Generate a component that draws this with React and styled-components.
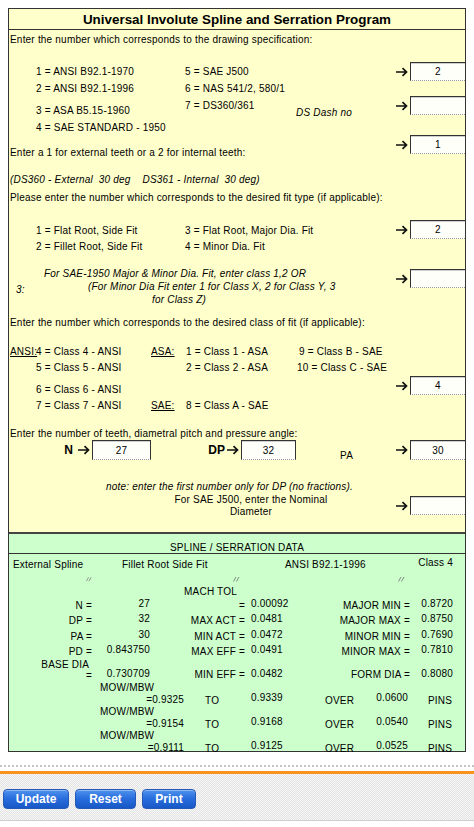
import React from "react";
import styled, { createGlobalStyle } from "styled-components";

const GlobalStyle = createGlobalStyle`
  html, body { margin: 0; padding: 0; background: #fff; }
  body { font-family: "Liberation Sans", Arial, sans-serif; color: #000; }
`;

const Page = styled.div`
  width: 474px;
  height: 827px;
  overflow: hidden;
  display: flex;
  flex-direction: column;
  background: #fff;
`;

const Sheet = styled.div`
  margin: 8px 0 0 8px;
  width: 456px;
  border: 1px solid #333;
  display: flex;
  flex-direction: column;
  font-size: 10px;
  letter-spacing: 0.2px;
`;

const Title = styled.div`
  height: 21px;
  background: #ffffcc;
  border-bottom: 1px solid #333;
  display: flex;
  align-items: center;
  justify-content: center;
  font-size: 13.4px;
  font-weight: bold;
  letter-spacing: 0;
  padding-top: 1px;
  box-sizing: border-box;
`;

const InputSection = styled.div`
  background: #ffffcc;
  border-bottom: 2px solid #444;
  display: flex;
  flex-direction: column;
`;

const Line = styled.div`
  display: grid;
  grid-template-columns: 27px 115px 34px 111px 100px 14px 55px;
  align-items: start;
  height: ${(p) => p.$h}px;
  margin-top: ${(p) => p.$mt || 0}px;
`;

const Txt = styled.div`
  grid-column: ${(p) => p.$col};
  grid-row: 1;
  padding-top: ${(p) => (p.$pt || 0) + 1}px;
  padding-left: ${(p) => p.$pl || 0}px;
  padding-right: ${(p) => p.$pr || 0}px;
  line-height: 12px;
  white-space: nowrap;
  font-style: ${(p) => (p.$italic ? "italic" : "normal")};
  text-align: ${(p) => p.$align || "left"};
`;

const Under = styled.span`
  text-decoration: underline;
`;

const Stack = styled.div`
  grid-column: ${(p) => p.$col};
  grid-row: 1;
  padding-top: ${(p) => (p.$pt || 0) + 1}px;
  padding-right: ${(p) => p.$pr || 0}px;
  line-height: ${(p) => p.$lh || 12}px;
  font-style: ${(p) => (p.$italic ? "italic" : "normal")};
  text-align: ${(p) => p.$align || "left"};
  white-space: nowrap;
`;

const IndentLine = styled.div`
  margin-left: ${(p) => p.$indent}px;
`;

const RightLine = styled.div`
  text-align: right;
`;

const ArrowCell = styled.div`
  grid-column: 6 / 7;
  grid-row: 1;
  height: 19px;
  margin-top: ${(p) => p.$top || 0}px;
  display: flex;
  align-items: center;
`;

const InputBox = styled.div`
  grid-column: ${(p) => p.$col || "7 / 8"};
  grid-row: 1;
  width: ${(p) => p.$w || 55}px;
  height: ${(p) => p.$hh || 19}px;
  margin-top: ${(p) => p.$top || 0}px;
  box-sizing: border-box;
  border: 1px solid #333;
  border-right: ${(p) => (p.$edge ? "none" : "1px solid #333")};
  border-bottom: 1px dotted #999;
  box-shadow: inset 0 1px 0 #cfcfcf;
  background: #fffffa;
  display: flex;
  align-items: center;
  justify-content: center;
  font-size: 10px;
  line-height: 12px;
  padding-top: 1px;
`;

const EntryGroup = styled.div`
  grid-column: ${(p) => p.$col};
  grid-row: 1;
  display: flex;
  justify-content: flex-end;
  align-items: center;
  gap: 2px;
`;

const BigLabel = styled.span`
  font-size: 12px;
  font-weight: bold;
  letter-spacing: 0;
  margin-right: ${(p) => p.$gap || 0}px;
`;

const DataSection = styled.div`
  background: #ccffcc;
  display: flex;
  flex-direction: column;
`;

const DataHead = styled.div`
  height: 20px;
  box-sizing: border-box;
  border-bottom: 1px solid #333;
  padding-top: 8px;
  line-height: 12px;
  text-align: center;
`;

const DataRow = styled.div`
  display: grid;
  grid-template-columns: 83px 58px 95px 85px 80px 43px 12px;
  align-items: start;
  height: ${(p) => p.$h}px;
`;

const MowRow = styled.div`
  display: grid;
  grid-template-columns: 91px 84px 21px 46px 74px 41px 42px 20px 37px;
  align-items: start;
  height: ${(p) => p.$h || 24}px;
`;

const Grip = styled.div`
  grid-column: ${(p) => p.$col};
  grid-row: 1;
  padding-left: ${(p) => p.$pl}px;
  padding-top: 4px;
  display: flex;
`;

const Footer = styled.div`
  margin-top: 13px;
  border-top: 2px dotted #c4c4c4;
  padding-top: 4px;
  display: flex;
  flex-direction: column;
`;

const OrangeBar = styled.div`
  height: 3px;
  background: #f7941d;
`;

const Toolbar = styled.div`
  height: 47px;
  box-sizing: border-box;
  border-bottom: 1px solid #cfcfcf;
  background: repeating-conic-gradient(#e4e4e4 0 25%, #f6f6f6 0 50%) 0 0 / 2px 2px;
  display: flex;
  align-items: flex-start;
  gap: 6px;
  padding: 15px 0 0 3px;
`;

const Button = styled.button`
  width: ${(p) => p.$w}px;
  height: 20px;
  border: 1px solid #2559b8;
  border-radius: 4px;
  background: linear-gradient(#4f93ee 0%, #2a6fde 45%, #1857c6 100%);
  color: #fff;
  font-family: "Liberation Sans", Arial, sans-serif;
  font-size: 12px;
  font-weight: bold;
  padding: 0;
  cursor: pointer;
  box-shadow: inset 0 1px 0 rgba(255, 255, 255, 0.35);
`;

const ArrowIcon = () => (
  <svg width="12" height="10" viewBox="0 0 12 10">
    <path d="M0 5H10.5M6.5 1.2L10.5 5L6.5 8.8" stroke="#111" strokeWidth="1.7" fill="none" />
  </svg>
);

const GripIcon = () => (
  <svg width="7" height="6" viewBox="0 0 7 6">
    <path d="M0.5 5.5L3 1M3.5 5.5L6 1" stroke="#7a7a7a" strokeWidth="0.9" fill="none" />
  </svg>
);

const Arrow = ({ top }) => (
  <ArrowCell $top={top}>
    <ArrowIcon />
  </ArrowCell>
);

const dataRows = [
  { h: 15, l1: "N =", v1: "27", l2: "=", v2: "0.00092", l3: "MAJOR MIN =", v3: "0.8720" },
  { h: 16, l1: "DP =", v1: "32", l2: "MAX ACT =", v2: "0.0481", l3: "MAJOR MAX =", v3: "0.8750" },
  { h: 15, l1: "PA =", v1: "30", l2: "MIN ACT =", v2: "0.0472", l3: "MINOR MIN =", v3: "0.7690" },
  { h: 15, l1: "PD =", v1: "0.843750", l2: "MAX EFF =", v2: "0.0491", l3: "MINOR MAX =", v3: "0.7810" },
];

const mowRows = [
  ["=0.9325", "0.9339", "0.0600"],
  ["=0.9154", "0.9168", "0.0540"],
  ["=0.9111", "0.9125", "0.0525"],
];

export default function App() {
  return (
    <Page>
      <GlobalStyle />
      <Sheet>
        <Title>Universal Involute Spline and Serration Program</Title>
        <InputSection>
          <Line $h={19}>
            <Txt $col="1 / 6" $pt={3} $pl={1}>
              Enter the number which corresponds to the drawing specification:
            </Txt>
          </Line>
          <Line $h={19} $mt={13}>
            <Txt $col="2 / 4" $pt={3}>1 = ANSI B92.1-1970</Txt>
            <Txt $col="4 / 5" $pt={3}>5 = SAE J500</Txt>
            <Arrow />
            <InputBox $edge>2</InputBox>
          </Line>
          <Line $h={15}>
            <Txt $col="2 / 4" $pt={1}>2 = ANSI B92.1-1996</Txt>
            <Txt $col="4 / 5" $pt={1}>6 = NAS 541/2, 580/1</Txt>
          </Line>
          <Line $h={22}>
            <Txt $col="2 / 4" $pt={8}>3 = ASA B5.15-1960</Txt>
            <Txt $col="4 / 5" $pt={3}>7 = DS360/361</Txt>
            <Txt $col="5 / 6" $pt={10} $italic>DS Dash no</Txt>
            <Arrow />
            <InputBox $edge />
          </Line>
          <Line $h={17}>
            <Txt $col="2 / 5" $pt={3}>4 = SAE STANDARD - 1950</Txt>
          </Line>
          <Line $h={25}>
            <Txt $col="1 / 6" $pt={11} $pl={1}>
              Enter a 1 for external teeth or a 2 for internal teeth:
            </Txt>
            <Arrow />
            <InputBox $edge>1</InputBox>
          </Line>
          <Line $h={28}>
            <Txt $col="1 / 6" $pt={13} $pl={1} $italic>
              (DS360 - External&nbsp; 30 deg&nbsp;&nbsp;&nbsp; DS361 - Internal&nbsp; 30 deg)
            </Txt>
          </Line>
          <Line $h={18}>
            <Txt $col="1 / 8" $pt={3} $pl={1}>
              Please enter the number which corresponds to the desired fit type (if applicable):
            </Txt>
          </Line>
          <Line $h={19} $mt={14}>
            <Txt $col="2 / 4" $pt={4}>1 = Flat Root, Side Fit</Txt>
            <Txt $col="4 / 6" $pt={4}>3 = Flat Root, Major Dia. Fit</Txt>
            <Arrow />
            <InputBox $edge>2</InputBox>
          </Line>
          <Line $h={15}>
            <Txt $col="2 / 4" $pt={1}>2 = Fillet Root, Side Fit</Txt>
            <Txt $col="4 / 6" $pt={1}>4 = Minor Dia. Fit</Txt>
          </Line>
          <Line $h={40} $mt={11}>
            <Txt $col="1 / 2" $pt={18} $pl={7} $italic>3:</Txt>
            <Stack $col="2 / 6" $pt={1} $lh={13} $italic>
              <IndentLine $indent={8}>For SAE-1950 Major &amp; Minor Dia. Fit, enter class 1,2 OR</IndentLine>
              <IndentLine $indent={52}>(For Minor Dia Fit enter 1 for Class X, 2 for Class Y, 3</IndentLine>
              <IndentLine $indent={116}>for Class Z)</IndentLine>
            </Stack>
            <Arrow top={4} />
            <InputBox $edge $top={4} />
          </Line>
          <Line $h={38}>
            <Txt $col="1 / 8" $pt={11} $pl={1}>
              Enter the number which corresponds to the desired class of fit (if applicable):
            </Txt>
          </Line>
          <Line $h={16}>
            <Txt $col="1 / 2" $pt={2} $pl={1}><Under>ANSI:</Under></Txt>
            <Txt $col="2 / 3" $pt={2}>4 = Class 4 - ANSI</Txt>
            <Txt $col="3 / 4" $pt={2}><Under>ASA:</Under></Txt>
            <Txt $col="4 / 5" $pt={2} $pl={1}>1 = Class 1 - ASA</Txt>
            <Txt $col="5 / 6" $pt={2} $pl={3}>9 = Class B - SAE</Txt>
          </Line>
          <Line $h={16}>
            <Txt $col="2 / 3" $pt={2}>5 = Class 5 - ANSI</Txt>
            <Txt $col="4 / 5" $pt={2} $pl={1}>2 = Class 2 - ASA</Txt>
            <Txt $col="5 / 6" $pt={2} $pl={1}>10 = Class C - SAE</Txt>
          </Line>
          <Line $h={21}>
            <Txt $col="2 / 3" $pt={8}>6 = Class 6 - ANSI</Txt>
            <Arrow top={1} />
            <InputBox $edge $top={1}>4</InputBox>
          </Line>
          <Line $h={17}>
            <Txt $col="2 / 3" $pt={3}>7 = Class 7 - ANSI</Txt>
            <Txt $col="3 / 4" $pt={3}><Under>SAE:</Under></Txt>
            <Txt $col="4 / 5" $pt={3} $pl={1}>8 = Class A - SAE</Txt>
          </Line>
          <Line $h={27}>
            <Txt $col="1 / 8" $pt={14} $pl={1}>
              Enter the number of teeth, diametral pitch and pressure angle:
            </Txt>
          </Line>
          <Line $h={20}>
            <EntryGroup $col="1 / 3">
              <BigLabel $gap={3}>N</BigLabel>
              <ArrowIcon />
              <InputBox $w={59} $hh={20}>27</InputBox>
            </EntryGroup>
            <EntryGroup $col="3 / 5">
              <BigLabel>DP</BigLabel>
              <ArrowIcon />
              <InputBox $w={55} $hh={20}>32</InputBox>
            </EntryGroup>
            <Txt $col="5 / 6" $pt={9} $pl={44}>PA</Txt>
            <Arrow />
            <InputBox $edge $hh={20}>30</InputBox>
          </Line>
          <Line $h={32}>
            <Txt $col="1 / 6" $pt={20} $pl={97} $italic>
              note: enter the first number only for DP (no fractions).
            </Txt>
          </Line>
          <Line $h={40}>
            <Stack $col="3 / 6" $pt={1} $pr={45} $align="center">
              <div>For SAE J500, enter the Nominal</div>
              <div>Diameter</div>
            </Stack>
            <Arrow top={4} />
            <InputBox $edge $top={4} />
          </Line>
        </InputSection>

        <DataSection>
          <DataHead>SPLINE / SERRATION DATA</DataHead>
          <DataRow $h={18}>
            <Txt $col="1 / 3" $pt={4} $pl={4}>External Spline</Txt>
            <Txt $col="2 / 4" $pt={4} $pl={30}>Fillet Root Side Fit</Txt>
            <Txt $col="4 / 6" $pt={4} $pl={40}>ANSI B92.1-1996</Txt>
            <Txt $col="5 / 7" $pt={2} $align="right">Class 4</Txt>
          </DataRow>
          <DataRow $h={12}>
            <Grip $col="1 / 2" $pl={77}><GripIcon /></Grip>
            <Grip $col="3 / 4" $pl={83}><GripIcon /></Grip>
            <Grip $col="5 / 6" $pl={68}><GripIcon /></Grip>
          </DataRow>
          <DataRow $h={12}>
            <Stack $col="3 / 4" $pt={1} $lh={11} $align="right" $pr={8}>MACH TOL</Stack>
          </DataRow>
          {dataRows.map((r) => (
            <DataRow key={r.l1} $h={r.h}>
              <Txt $col="1 / 2" $pt={3} $align="right">{r.l1}</Txt>
              <Txt $col="2 / 3" $pt={1} $align="right">{r.v1}</Txt>
              <Txt $col="3 / 4" $pt={3} $align="right">{r.l2}</Txt>
              <Txt $col="4 / 5" $pt={1} $pl={6}>{r.v2}</Txt>
              <Txt $col="5 / 6" $pt={3} $align="right">{r.l3}</Txt>
              <Txt $col="6 / 7" $pt={1} $align="right">{r.v3}</Txt>
            </DataRow>
          ))}
          <DataRow $h={23}>
            <Stack $col="1 / 2" $pt={1} $lh={11} $align="right">
              <div>BASE DIA&nbsp;</div>
              <div>=</div>
            </Stack>
            <Txt $col="2 / 3" $pt={10} $align="right">0.730709</Txt>
            <Txt $col="3 / 4" $pt={11} $align="right">MIN EFF =</Txt>
            <Txt $col="4 / 5" $pt={10} $pl={6}>0.0482</Txt>
            <Txt $col="5 / 6" $pt={11} $align="right">FORM DIA =</Txt>
            <Txt $col="6 / 7" $pt={10} $align="right">0.8080</Txt>
          </DataRow>
          {mowRows.map(([mow, to, pin], i) => (
            <MowRow key={mow} $h={i === 2 ? 23 : 24}>
              <Stack $col="2 / 3" $pt={1}>
                <div>MOW/MBW</div>
                <RightLine>{mow}</RightLine>
              </Stack>
              <Txt $col="4 / 5" $pt={14}>TO</Txt>
              <Txt $col="5 / 6" $pt={11}>{to}</Txt>
              <Txt $col="6 / 7" $pt={14}>OVER</Txt>
              <Txt $col="7 / 8" $pt={11} $align="right">{pin}</Txt>
              <Txt $col="9 / 10" $pt={14}>PINS</Txt>
            </MowRow>
          ))}
        </DataSection>
      </Sheet>

      <Footer>
        <OrangeBar />
        <Toolbar>
          <Button $w={66}>Update</Button>
          <Button $w={61}>Reset</Button>
          <Button $w={54}>Print</Button>
        </Toolbar>
      </Footer>
    </Page>
  );
}
